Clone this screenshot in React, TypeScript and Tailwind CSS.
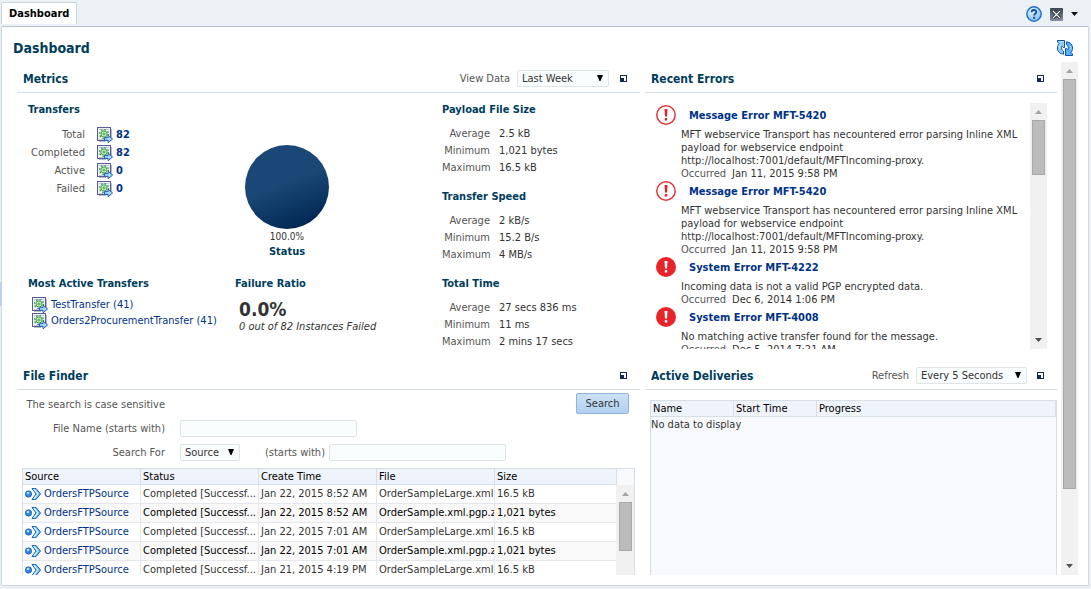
import { useState } from 'react'
import type { ReactNode } from 'react'

interface Stat {
  label: string
  value: string
}

interface ErrorEntry {
  kind: 'message' | 'system'
  title: string
  text: string
  occurred: string
}

interface FileRow {
  created: string
  file: string
  size: string
}

const transfers: Stat[] = [
  { label: 'Total', value: '82' },
  { label: 'Completed', value: '82' },
  { label: 'Active', value: '0' },
  { label: 'Failed', value: '0' },
]

const activeTransfers = ['TestTransfer (41)', 'Orders2ProcurementTransfer (41)']

const statGroups: { title: string; stats: Stat[] }[] = [
  {
    title: 'Payload File Size',
    stats: [
      { label: 'Average', value: '2.5 kB' },
      { label: 'Minimum', value: '1,021 bytes' },
      { label: 'Maximum', value: '16.5 kB' },
    ],
  },
  {
    title: 'Transfer Speed',
    stats: [
      { label: 'Average', value: '2 kB/s' },
      { label: 'Minimum', value: '15.2 B/s' },
      { label: 'Maximum', value: '4 MB/s' },
    ],
  },
  {
    title: 'Total Time',
    stats: [
      { label: 'Average', value: '27 secs 836 ms' },
      { label: 'Minimum', value: '11 ms' },
      { label: 'Maximum', value: '2 mins 17 secs' },
    ],
  },
]

const proxyError = 'MFT webservice Transport has necountered error parsing Inline XML payload for webservice endpoint http://localhost:7001/default/MFTIncoming-proxy.'

const errors: ErrorEntry[] = [
  { kind: 'message', title: 'Message Error MFT-5420', text: proxyError, occurred: 'Jan 11, 2015 9:58 PM' },
  { kind: 'message', title: 'Message Error MFT-5420', text: proxyError, occurred: 'Jan 11, 2015 9:58 PM' },
  { kind: 'system', title: 'System Error MFT-4222', text: 'Incoming data is not a valid PGP encrypted data.', occurred: 'Dec 6, 2014 1:06 PM' },
  { kind: 'system', title: 'System Error MFT-4008', text: 'No matching active transfer found for the message.', occurred: 'Dec 5, 2014 7:21 AM' },
]

const files: FileRow[] = [
  { created: 'Jan 22, 2015 8:52 AM', file: 'OrderSampleLarge.xml.', size: '16.5 kB' },
  { created: 'Jan 22, 2015 8:52 AM', file: 'OrderSample.xml.pgp.zi', size: '1,021 bytes' },
  { created: 'Jan 22, 2015 7:01 AM', file: 'OrderSampleLarge.xml.', size: '16.5 kB' },
  { created: 'Jan 22, 2015 7:01 AM', file: 'OrderSample.xml.pgp.zi', size: '1,021 bytes' },
  { created: 'Jan 21, 2015 4:19 PM', file: 'OrderSampleLarge.xml.', size: '16.5 kB' },
]

function TransferIcon() {
  return (
    <svg width="16" height="16" viewBox="0 0 16 16" className="shrink-0" aria-hidden="true">
      <path d="M14.5 2v9M2 14.5h7" stroke="#b9b9cc" />
      <rect x="0.5" y="0.5" width="13" height="13" fill="#eeeefa" stroke="#5a5a94" />
      <path d="M2 2.5h10M2 12.5h5" stroke="#c5c5e0" />
      <circle cx="7" cy="7" r="4.4" fill="none" stroke="#2f9a36" strokeWidth="1.4" strokeDasharray="1.5 1.95" />
      <circle cx="7" cy="7" r="3.1" fill="#c4f0ba" stroke="#2f9a36" strokeWidth="0.9" />
      <circle cx="7" cy="7" r="1" fill="#fff" stroke="#1d6f25" strokeWidth="0.7" />
      <path d="M7.5 10.6h3.6V8.2l4.5 3.8-4.5 3.8v-2.4H7.5z" fill="#9fd8ff" stroke="#1c50a8" strokeWidth="0.9" strokeLinejoin="round" />
    </svg>
  )
}

function SourceIcon() {
  return (
    <svg width="16" height="12" viewBox="0 0 16 12" className="shrink-0" aria-hidden="true">
      <circle cx="3.5" cy="6" r="3.2" fill="#2a86e8" stroke="#12509c" strokeWidth="0.6" />
      <circle cx="3" cy="5" r="1.3" fill="#b8e0ff" />
      <path d="M7 .5h4L15.500 6 11 11.500H7L11 6z" fill="#5db4f5" stroke="#1560b8" strokeLinejoin="round" />
      <path d="M8.800 1 13 6l-4.200 5" fill="none" stroke="#e2f5ff" strokeWidth="1.300" />
    </svg>
  )
}

function ErrorIcon({ kind }: { kind: ErrorEntry['kind'] }) {
  const solid = kind === 'system'
  return (
    <svg width="20" height="20" viewBox="0 0 20 20" className="shrink-0" aria-hidden="true">
      <circle cx="10" cy="10" r={solid ? 10 : 9.2} fill={solid ? '#e8242a' : '#fff'} stroke={solid ? 'none' : '#e3343a'} strokeWidth="1.5" />
      <path d="M8.5 4h3l-.5 7.5H9z" fill={solid ? '#fff' : '#d8242c'} />
      <rect x="8.8" y="13" width="2.4" height="2.5" fill={solid ? '#fff' : '#d8242c'} />
    </svg>
  )
}

function RefreshIcon() {
  return (
    <svg width="16" height="16" viewBox="0 0 16 16" aria-hidden="true">
      <path d="M.5.500h7v7H6.200L5 6.300C4 8 4.300 9.800 6.500 11.200v3C2.500 13.800.5 11 .5 8c0-2 .5-3.400 1.500-4.500L.5 2z" fill="#8dcbfc" stroke="#0d50ac" strokeLinejoin="round" />
      <path d="M15.500 15.500h-7v-7h1.300L11 9.700c1-1.700.7-3.500-1.500-4.900v-3c4 .4 6 3.200 6 6.200 0 2-.5 3.400-1.500 4.500l1.500 1.500z" fill="#57b0f8" stroke="#0d50ac" strokeLinejoin="round" />
      <path d="M2.500 1.600h4M2 8.500c0-1.500.4-2.800 1.200-4M13.500 6c.4 1.200.5 2.400.3 3.500" fill="none" stroke="#d3edff" />
    </svg>
  )
}

function HelpIcon() {
  return (
    <svg width="16" height="16" viewBox="0 0 16 16" aria-hidden="true">
      <defs>
        <radialGradient id="help" cx="0.4" cy="0.3" r="0.8">
          <stop offset="0" stopColor="#e6f6ff" />
          <stop offset="1" stopColor="#6fb8f5" />
        </radialGradient>
      </defs>
      <circle cx="8" cy="8" r="7.200" fill="url(#help)" stroke="#2a6fbd" strokeWidth="1.400" />
      <path d="M5.700 6.200C5.700 3.300 10.300 3.300 10.300 6c0 1.800-2.200 1.700-2.200 3.600" fill="none" stroke="#0d4aa5" strokeWidth="1.800" />
      <rect x="7.100" y="10.800" width="2" height="1.900" fill="#0d4aa5" />
    </svg>
  )
}

function CloseAllIcon() {
  return (
    <svg width="13" height="13" viewBox="0 0 13 13" aria-hidden="true">
      <defs>
        <linearGradient id="closeAll" x1="0" y1="0" x2="0" y2="1">
          <stop offset="0" stopColor="#3b4453" />
          <stop offset="1" stopColor="#8690a0" />
        </linearGradient>
      </defs>
      <rect width="13" height="13" rx="1" fill="url(#closeAll)" />
      <path d="m3 3 7 7M10 3l-7 7" stroke="#111722" strokeWidth="2.800" />
      <path d="m3 3 7 7M10 3l-7 7" stroke="#fff" strokeWidth="1.200" />
    </svg>
  )
}

function MaximizeButton({ name }: { name: string }) {
  return (
    <button type="button" aria-label={`Maximize ${name}`} className="shrink-0">
      <svg width="7" height="7" viewBox="0 0 7 7" className="block" aria-hidden="true">
        <path d="M0 0h7v7H0z" fill="#17274f" />
        <path d="M1 1h5v5H4V3H1z" fill="#fff" />
      </svg>
    </button>
  )
}

interface ScrollbarProps {
  thumb: string
  endArrow?: boolean
}

function Scrollbar({ thumb, endArrow = true }: ScrollbarProps) {
  return (
    <div className="flex w-[17px] shrink-0 flex-col items-center bg-[#f1f1f1]" aria-hidden="true">
      <svg width="17" height="17" viewBox="0 0 17 17" className="shrink-0">
        <path d="M5 11h7L8.500 7z" fill="#a3a3a3" />
      </svg>
      <div className="min-h-0 w-full flex-1 px-0.5">
        <div className={`border border-[#a8a8a8] bg-[#bcbcbc] ${thumb}`} />
      </div>
      {endArrow && (
        <svg width="17" height="17" viewBox="0 0 17 17" className="shrink-0">
          <path d="M5 6h7L8.500 10z" fill="#505050" />
        </svg>
      )}
    </div>
  )
}

interface DropdownProps {
  id: string
  options: string[]
  className: string
}

function Dropdown({ id, options, className }: DropdownProps) {
  const [value, setValue] = useState(options[0])

  return (
    <div className={`relative shrink-0 ${className}`}>
      <select
        id={id}
        value={value}
        onChange={(e) => setValue(e.target.value)}
        className="block h-[17px] w-full appearance-none rounded-xs border border-[#dfe4e7] bg-[#fafdfe] pl-1 leading-[15px] text-[#333]"
      >
        {options.map((option) => (
          <option key={option}>{option}</option>
        ))}
      </select>
      <svg width="6" height="6" viewBox="0 0 6 6" className="pointer-events-none absolute top-[5px] right-1.5" aria-hidden="true">
        <path d="M0 0h6L3.500 6h-1z" fill="#000" />
      </svg>
    </div>
  )
}

function SectionHeader({ title, children }: { title: string; children?: ReactNode }) {
  return (
    <div className="flex h-[29px] shrink-0 items-center border-b border-[#d6dfe6] pr-[13px] pl-1.5">
      <h2 className="flex-1 pt-0.5 text-[12px] font-bold text-[#003d5b]">{title}</h2>
      {children}
      <MaximizeButton name={title} />
    </div>
  )
}

function SubHeading({ children }: { children: ReactNode }) {
  return <h3 className="h-[18px] text-[11px] leading-[18px] font-bold text-[#003d5b]">{children}</h3>
}

function Metrics() {
  return (
    <section>
      <SectionHeader title="Metrics">
        <label htmlFor="viewData" className="mr-[7px] pt-0.5 text-[#555]">View Data</label>
        <Dropdown id="viewData" options={['Last Week', 'Last Day', 'Last Month']} className="mr-[11px] w-[92px]" />
      </SectionHeader>
      <div className="grid h-[268px] grid-cols-3 pt-2 pl-0.5">
        <div className="pl-[9px]">
          <div className="h-[174px]">
            <SubHeading>Transfers</SubHeading>
            <dl className="mt-[7px]">
              {transfers.map((item) => (
                <div key={item.label} className="flex h-[18px] items-center">
                  <dt className="mr-3 w-[57px] text-right text-[#555]">{item.label}</dt>
                  <dd>
                    <a href="#" className="flex items-center gap-[3px] font-bold text-[#003286]">
                      <TransferIcon />
                      {item.value}
                    </a>
                  </dd>
                </div>
              ))}
            </dl>
          </div>
          <SubHeading>Most Active Transfers</SubHeading>
          <ul className="mt-1 pl-1">
            {activeTransfers.map((name) => (
              <li key={name}>
                <a href="#" className="flex h-4 items-center gap-[3px] whitespace-nowrap text-[#003286]">
                  <TransferIcon />
                  {name}
                </a>
              </li>
            ))}
          </ul>
        </div>
        <div className="pl-[9px]">
          <div className="flex h-[174px] w-[104px] flex-col items-center pt-11">
            <svg width="84" height="84" viewBox="0 0 84 84" className="shrink-0" role="img" aria-label="Status">
              <defs>
                <linearGradient id="pie" x1="0.3" y1="0" x2="0.7" y2="1">
                  <stop offset="0.45" stopColor="#1a4775" />
                  <stop offset="1" stopColor="#002653" />
                </linearGradient>
              </defs>
              <circle cx="42" cy="42" r="42" fill="url(#pie)" />
            </svg>
            <span className="text-[10px] leading-4">100.0%</span>
            <span className="font-bold text-[#003d5b]">Status</span>
          </div>
          <SubHeading>Failure Ratio</SubHeading>
          <p className="mt-1.5 pl-1 text-[19px] leading-5 font-bold">0.0%</p>
          <p className="pl-1 leading-4 whitespace-nowrap italic">0 out of 82 Instances Failed</p>
        </div>
        <div className="pl-[9px]">
          {statGroups.map((group) => (
            <div key={group.title} className="mb-3">
              <SubHeading>{group.title}</SubHeading>
              <dl className="mt-1.5">
                {group.stats.map((stat) => (
                  <div key={stat.label} className="flex leading-[17px]">
                    <dt className="mr-[9px] w-12 text-right text-[#555]">{stat.label}</dt>
                    <dd>{stat.value}</dd>
                  </div>
                ))}
              </dl>
            </div>
          ))}
        </div>
      </div>
    </section>
  )
}

function RecentErrors() {
  return (
    <section>
      <SectionHeader title="Recent Errors" />
      <div className="flex h-[268px] pt-2.5 pr-2.5 pb-3 pl-[11px]">
        <div className="min-w-0 flex-1 overflow-hidden pt-px">
          {errors.map((error, i) => (
            <article key={i}>
              <div className="flex h-6 gap-[13px] pt-px">
                <ErrorIcon kind={error.kind} />
                <a href="#" className="leading-[22px] font-bold text-[#003286]">{error.title}</a>
              </div>
              <div className="pr-3 pl-[25px] leading-[13px]">
                <p>{error.text}</p>
                <p>
                  <span className="mr-1.5 text-[#555]">Occurred</span>
                  {error.occurred}
                </p>
              </div>
            </article>
          ))}
        </div>
        <Scrollbar thumb="h-[55px]" />
      </div>
    </section>
  )
}

function FileFinder() {
  const [fileName, setFileName] = useState('')
  const [source, setSource] = useState('')

  return (
    <section className="flex min-h-0 flex-col">
      <SectionHeader title="File Finder" />
      <form className="pt-[3px] pr-[11px]" onSubmit={(e) => e.preventDefault()}>
        <div className="flex h-[21px] justify-between">
          <p className="w-[148px] text-right leading-6 whitespace-nowrap text-[#555]">The search is case sensitive</p>
          <button
            type="submit"
            className="w-[53px] rounded-xs border border-[#8fb3d9] bg-linear-to-b from-[#cde1f7] to-[#b0d0f0]"
          >
            Search
          </button>
        </div>
        <div className="mt-1.5 flex h-[17px] items-center">
          <label htmlFor="fileName" className="mr-[15px] w-[148px] text-right whitespace-nowrap text-[#555]">File Name (starts with)</label>
          <input
            id="fileName"
            value={fileName}
            onChange={(e) => setFileName(e.target.value)}
            className="h-[17px] w-[177px] rounded-xs border border-[#dfe4e7] bg-[#fafdfe] px-1"
          />
        </div>
        <div className="mt-[7px] flex h-[17px] items-center">
          <label htmlFor="searchFor" className="mr-[15px] w-[148px] text-right text-[#555]">Search For</label>
          <Dropdown id="searchFor" options={['Source', 'Target']} className="w-[60px]" />
          <label htmlFor="sourceName" className="mr-1 w-[85px] text-right text-[#555]">(starts with)</label>
          <input
            id="sourceName"
            value={source}
            onChange={(e) => setSource(e.target.value)}
            className="h-[17px] w-[177px] rounded-xs border border-[#dfe4e7] bg-[#fafdfe] px-1"
          />
        </div>
      </form>
      <div className="mt-[7px] mr-[5px] ml-[5px] flex min-h-0 flex-1 border border-b-0 border-[#d6dfe6]">
        <div className="min-w-0 flex-1 overflow-hidden">
          <table className="w-full table-fixed border-separate border-spacing-0 text-left">
            <thead>
              <tr className="h-4 bg-[#eff3fb] text-black">
                {['Source', 'Status', 'Create Time', 'File'].map((name) => (
                  <th key={name} className="w-[118px] border-r border-b border-[#d6dfe6] p-0 pl-0.5 leading-[15px] font-normal">{name}</th>
                ))}
                <th className="border-b border-[#d6dfe6] p-0 pl-0.5 leading-[15px] font-normal">Size</th>
              </tr>
            </thead>
            <tbody>
              {files.map((row, i) => (
                <tr key={i} className="h-[19px] even:bg-[#f9f9f9] even:text-black">
                  <td className="border-r border-b border-[#e4e8ec] p-0 pl-0.5">
                    <a href="#" className="flex items-center gap-[3px] text-[#003286]">
                      <SourceIcon />
                      OrdersFTPSource
                    </a>
                  </td>
                  <td className="overflow-hidden border-r border-b border-[#e4e8ec] p-0 pl-0.5 whitespace-nowrap">Completed [Successf...</td>
                  <td className="overflow-hidden border-r border-b border-[#e4e8ec] p-0 pl-0.5 whitespace-nowrap">{row.created}</td>
                  <td className="overflow-hidden border-r border-b border-[#e4e8ec] p-0 pl-0.5 whitespace-nowrap">{row.file}</td>
                  <td className="border-b border-[#e4e8ec] p-0 pl-0.5">{row.size}</td>
                </tr>
              ))}
            </tbody>
          </table>
        </div>
        <div className="flex flex-col">
          <div className="h-4 w-[18px] shrink-0 border-l border-[#d6dfe6] bg-[#f7f9fd]" />
          <div className="flex min-h-0 flex-1 justify-end overflow-hidden bg-[#f1f1f1]">
            <Scrollbar thumb="h-[49px]" endArrow={false} />
          </div>
        </div>
      </div>
    </section>
  )
}

function ActiveDeliveries() {
  return (
    <section className="flex min-h-0 flex-col">
      <SectionHeader title="Active Deliveries">
        <label htmlFor="refresh" className="mr-[7px] pt-0.5 text-[#555]">Refresh</label>
        <Dropdown id="refresh" options={['Every 5 Seconds', 'Every 30 Seconds', 'Never']} className="mr-2.5 w-[111px]" />
      </SectionHeader>
      <div className="mt-2.5 ml-[5px] min-h-0 flex-1 border border-b-0 border-[#d6dfe6] bg-[#f7f9fd]">
        <table className="w-full table-fixed border-separate border-spacing-0 text-left">
          <thead>
            <tr className="h-4 bg-[#eff3fb] text-black">
              <th className="w-[83px] border-r border-b border-[#d6dfe6] p-0 pl-0.5 leading-[15px] font-normal">Name</th>
              <th className="w-[83px] border-r border-b border-[#d6dfe6] p-0 pl-0.5 leading-[15px] font-normal">Start Time</th>
              <th className="border-r border-b border-[#d6dfe6] p-0 pl-0.5 leading-[15px] font-normal">Progress</th>
            </tr>
          </thead>
          <tbody>
            <tr>
              <td colSpan={3} className="p-0 leading-[15px]">No data to display</td>
            </tr>
          </tbody>
        </table>
      </div>
    </section>
  )
}

export default function App() {
  return (
    <div className="relative flex h-screen flex-col bg-[#ecf1f6] pr-0.5 pb-[3px] pl-px font-['DejaVu_Sans_Condensed','Noto_Sans',sans-serif] text-[11px] leading-[14px] text-[#333]">
      <div className="absolute top-[282px] left-0 h-6 w-0.5 bg-[#bcd2f0]" />
      <header className="flex h-[26px] shrink-0 items-start justify-between pt-0.5 pr-[11px]">
        <div className="flex h-[22px] items-center rounded-t-xs border border-b-0 border-[#c9d3dd] bg-white px-[7px] font-bold text-black">
          Dashboard
        </div>
        <div className="flex h-6 items-center">
          <button type="button" aria-label="Help" className="mr-2"><HelpIcon /></button>
          <button type="button" aria-label="Close all" className="mr-2"><CloseAllIcon /></button>
          <button type="button" aria-label="Tab menu">
            <svg width="7" height="4" viewBox="0 0 7 4" aria-hidden="true">
              <path d="M0 0h7L3.500 4z" fill="#111" />
            </svg>
          </button>
        </div>
      </header>
      <main className="flex min-h-0 flex-1 flex-col rounded-xs border border-[#ccd6df] border-t-[#b8c4d2] bg-white pr-2.5 pb-2.5 pl-[15px]">
        <div className="-ml-1 flex h-[35px] shrink-0 items-center justify-between pt-1.5 pr-[5px]">
          <h1 className="text-[14px] font-bold text-[#003d5b]">Dashboard</h1>
          <button type="button" aria-label="Refresh"><RefreshIcon /></button>
        </div>
        <div className="flex min-h-0 flex-1 gap-1">
          <div className="grid min-w-0 flex-1 grid-cols-[623fr_412fr] grid-rows-[auto_minmax(0,1fr)] gap-x-[5px] overflow-hidden pt-0.5">
            <Metrics />
            <RecentErrors />
            <FileFinder />
            <ActiveDeliveries />
          </div>
          <Scrollbar thumb="h-[410px]" />
        </div>
      </main>
    </div>
  )
}
